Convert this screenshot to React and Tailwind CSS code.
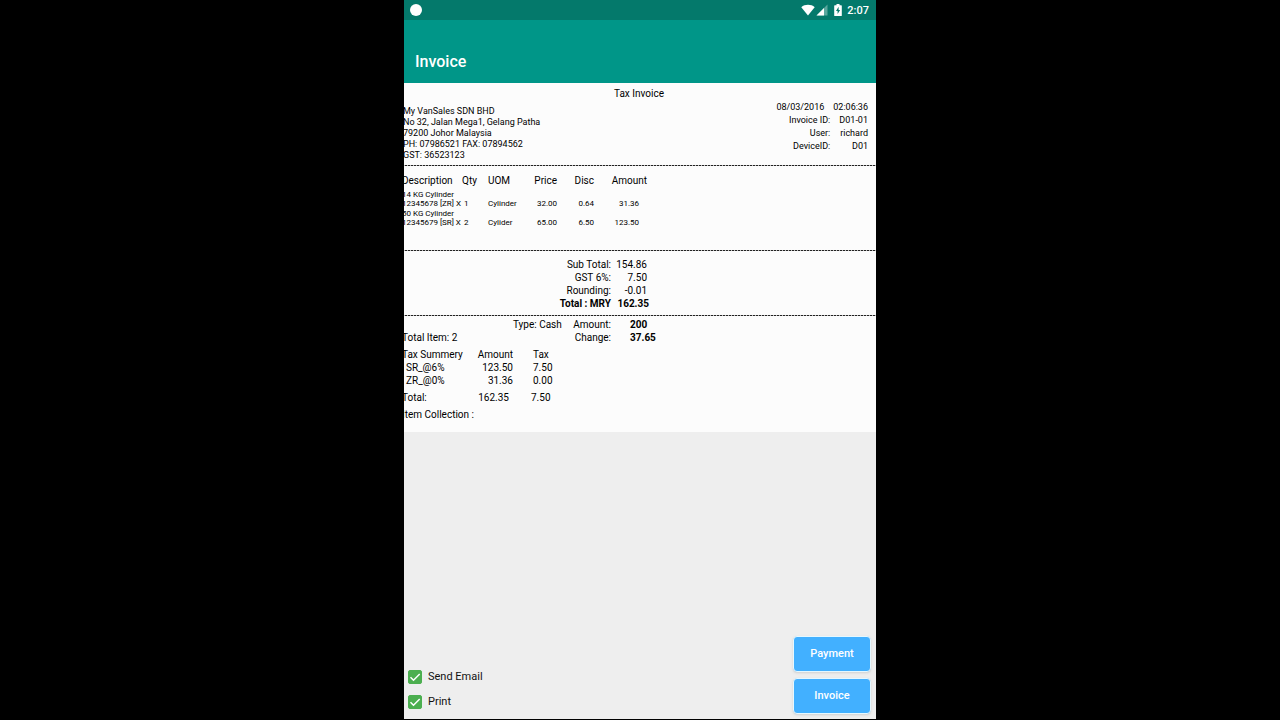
import React, { useState } from 'react';

const company = [
  'My VanSales SDN BHD',
  'No 32, Jalan Mega1, Gelang Patha',
  '79200 Johor Malaysia',
  'PH: 07986521 FAX: 07894562',
  'GST: 36523123',
];

const items = [
  { name: '14 KG Cylinder', code: '12345678 [ZR] X', qty: 1, uom: 'Cylinder', price: '32.00', disc: '0.64', amount: '31.36' },
  { name: '50 KG Cylinder', code: '12345679 [SR] X', qty: 2, uom: 'Cylider', price: '65.00', disc: '6.50', amount: '123.50' },
];

const totals = [
  { label: 'Sub Total:', value: '154.86' },
  { label: 'GST 6%:', value: '7.50' },
  { label: 'Rounding:', value: '-0.01' },
];

const taxes = [
  { label: 'SR_@6%', amount: '123.50', tax: '7.50' },
  { label: 'ZR_@0%', amount: '31.36', tax: '0.00' },
];

const Divider = () => (
  <div className="h-px bg-[repeating-linear-gradient(90deg,#222_0_2px,#bbb_2px_3px)]" />
);

const StatusBar = () => (
  <div className="h-5 bg-[#04796b] flex items-center justify-between pl-1.5 pr-[7px] text-white">
    <span className="h-3 w-3 rounded-full bg-white" />
    <div className="flex items-center">
      <svg className="h-3 w-[14px]" viewBox="0 0 14 12" fill="currentColor">
        <path d="M7 11.5 0.3 3.2C2.1 1.6 4.4 0.8 7 0.8s4.900.8 6.700 2.400z" />
      </svg>
      <svg className="h-3 w-3 ml-px" viewBox="0 0 12 12" fill="currentColor">
        <path d="M11.500 0.500v11H0.500z" opacity="0.35" />
        <path d="M8 4v7.500H0.500z" />
      </svg>
      <svg className="h-3 w-2 ml-1.5" viewBox="0 0 8 12">
        <path fill="currentColor" d="M2.500 0h3v1.300H7.200a.6.6 0 0 1 .6.6v9.500a.6.6 0 0 1-.6.6H.8a.6.6 0 0 1-.6-.6V1.900a.6.6 0 0 1 .6-.6h1.700z" />
        <path fill="#04796b" d="M4.600 2.800 2 7h1.600v3L6.100 5.900H4.600z" />
      </svg>
      <span className="ml-[5px] pt-px text-[11px] leading-5 font-medium">2:07</span>
    </div>
  </div>
);

const ItemsTable = () => (
  <table className="table-fixed w-[245px] text-[8px]">
    <colgroup>
      <col className="w-[60px]" />
      <col className="w-[26px]" />
      <col className="w-[42px]" />
      <col className="w-[27px]" />
      <col className="w-[37px]" />
      <col className="w-[53px]" />
    </colgroup>
    <thead>
      <tr className="text-[10px] leading-[13px] text-left">
        <th className="font-normal pb-0.5">Description</th>
        <th className="font-normal pb-0.5">Qty</th>
        <th className="font-normal pb-0.5">UOM</th>
        <th className="font-normal pb-0.5 text-right">Price</th>
        <th className="font-normal pb-0.5 text-right">Disc</th>
        <th className="font-normal pb-0.5 text-right">Amount</th>
      </tr>
    </thead>
    <tbody>
      {items.map((item) => (
        <tr key={item.code} className="h-[19px] align-bottom leading-[9px] whitespace-nowrap">
          <td>
            {item.name}
            <br />
            {item.code}
          </td>
          <td className="pl-0.5">{item.qty}</td>
          <td>{item.uom}</td>
          <td className="text-right">{item.price}</td>
          <td className="text-right">{item.disc}</td>
          <td className="text-right pr-2">{item.amount}</td>
        </tr>
      ))}
    </tbody>
  </table>
);

const TaxTable = () => (
  <table className="table-fixed w-[151px] mt-1 whitespace-nowrap">
    <thead>
      <tr className="text-left">
        <th className="font-normal w-[60px]">Tax Summery</th>
        <th className="font-normal w-[51px] text-right">Amount</th>
        <th className="font-normal pl-5">Tax</th>
      </tr>
    </thead>
    <tbody>
      {taxes.map((t) => (
        <tr key={t.label}>
          <td className="pl-1">{t.label}</td>
          <td className="text-right">{t.amount}</td>
          <td className="pl-5">{t.tax}</td>
        </tr>
      ))}
    </tbody>
    <tfoot>
      <tr>
        <td className="pt-1">Total:</td>
        <td className="pt-1 pr-1 text-right">162.35</td>
        <td className="pt-1 pl-[18px]">7.50</td>
      </tr>
    </tfoot>
  </table>
);

const Check = ({ label, checked, onChange }) => (
  <label className="flex items-center gap-1.5 text-[11px] leading-4 text-[#111]">
    <span className="relative h-[14px] w-[14px]">
      <input
        type="checkbox"
        checked={checked}
        onChange={onChange}
        className="block h-[14px] w-[14px] appearance-none rounded-xs border border-[#4caf50] checked:bg-[#4caf50]"
      />
      {checked && (
        <svg className="absolute inset-0 pointer-events-none" viewBox="0 0 14 14" fill="none" stroke="#fff" strokeWidth="1.500">
          <path d="M2.500 7.200 5.500 10.200 11.700 4" />
        </svg>
      )}
    </span>
    <span className="pt-px">{label}</span>
  </label>
);

const ActionButton = ({ children }) => (
  <button className="h-9 w-[78px] rounded-sm border border-[#e6f8ff] bg-[#42b0ff] pt-px text-[11px] font-medium text-white shadow-sm">
    {children}
  </button>
);

const App = () => {
  const [email, setEmail] = useState(true);
  const [print, setPrint] = useState(true);

  return (
    <div className="min-h-screen bg-black font-[Roboto,sans-serif]">
      <div className="mx-auto flex min-h-screen max-w-[472px] flex-col overflow-hidden border-b border-black bg-[#eee]">
        <StatusBar />
        <header className="bg-[#009688] px-[11px] pt-8 pb-[11px]">
          <h1 className="text-base leading-5 font-medium text-white">Invoice</h1>
        </header>

        <main className="bg-[#fcfcfc] pb-[11px] text-[10px] leading-[13px] text-black">
          <div className="-ml-0.5">
            <h2 className="pt-1 text-center">Tax Invoice</h2>
            <div className="flex items-start justify-between pt-px pr-2 pb-1 pl-px text-[9px]">
              <address className="mt-[5px] not-italic leading-[11px]">
                {company.map((line) => (
                  <p key={line}>{line}</p>
                ))}
              </address>
              <div className="grid grid-cols-[auto_auto] gap-x-[3px] text-right">
                <span className="pr-1.5">08/03/2016</span>
                <span>02:06:36</span>
                <span>Invoice ID:</span>
                <span>D01-01</span>
                <span>User:</span>
                <span>richard</span>
                <span>DeviceID:</span>
                <span>D01</span>
              </div>
            </div>

            <Divider />
            <div className="pt-2 pb-[23px]">
              <ItemsTable />
            </div>

            <Divider />
            <dl className="grid w-[247px] grid-cols-[1fr_38px] pt-[7px] pb-[5px] text-right">
              {totals.map((t) => (
                <React.Fragment key={t.label}>
                  <dt>{t.label}</dt>
                  <dd className="pr-0.5">{t.value}</dd>
                </React.Fragment>
              ))}
              <dt className="font-bold">Total : MRY</dt>
              <dd className="font-bold">162.35</dd>
            </dl>

            <Divider />
            <div className="grid w-[254px] grid-cols-[111px_98px_1fr] pt-0.5">
              <span />
              <div className="flex justify-between">
                <span>Type: Cash</span>
                <span>Amount:</span>
              </div>
              <b className="pl-[19px]">200</b>
              <span>Total Item: 2</span>
              <span className="text-right">Change:</span>
              <b className="pl-[19px]">37.65</b>
            </div>

            <TaxTable />
            <p className="mt-1">Item Collection :</p>
          </div>
        </main>

        <footer className="mt-auto flex items-end justify-between pr-[5px] pb-[5px] pl-1">
          <div className="flex flex-col gap-2 pb-1">
            <Check label="Send Email" checked={email} onChange={() => setEmail(!email)} />
            <Check label="Print" checked={print} onChange={() => setPrint(!print)} />
          </div>
          <div className="flex flex-col gap-1.5">
            <ActionButton>Payment</ActionButton>
            <ActionButton>Invoice</ActionButton>
          </div>
        </footer>
      </div>
    </div>
  );
};

export default App;
